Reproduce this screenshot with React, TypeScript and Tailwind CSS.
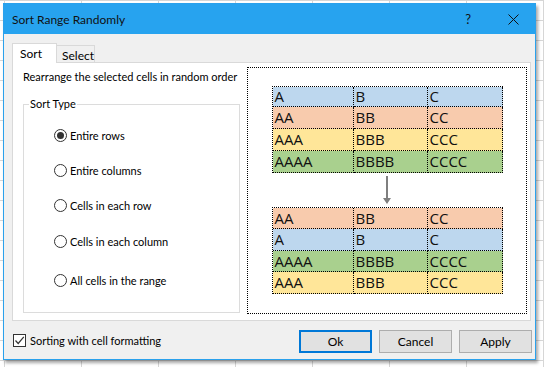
import React from 'react';

const ui = "font-['Lato','Open_Sans',sans-serif] text-[11px] leading-[15px] text-black";

const BLUE = 'bg-[#bdd7ee]';
const ORANGE = 'bg-[#f8cbad]';
const YELLOW = 'bg-[#ffe699]';
const GREEN = 'bg-[#a9d08e]';

type Row = { color: string; cells: string[]; h: string };

const topRows: Row[] = [
  { color: BLUE, cells: ['A', 'B', 'C'], h: 'h-[20px]' },
  { color: ORANGE, cells: ['AA', 'BB', 'CC'], h: 'h-[22px]' },
  { color: YELLOW, cells: ['AAA', 'BBB', 'CCC'], h: 'h-[22px]' },
  { color: GREEN, cells: ['AAAA', 'BBBB', 'CCCC'], h: 'h-[22px]' },
];

const bottomRows: Row[] = [
  { color: ORANGE, cells: ['AA', 'BB', 'CC'], h: 'h-[21px]' },
  { color: BLUE, cells: ['A', 'B', 'C'], h: 'h-[22px]' },
  { color: GREEN, cells: ['AAAA', 'BBBB', 'CCCC'], h: 'h-[21px]' },
  { color: YELLOW, cells: ['AAA', 'BBB', 'CCC'], h: 'h-[22px]' },
];

const colW = ['w-[81px]', 'w-[74px]', 'w-[75px]'];

const SampleTable: React.FC<{ rows: Row[] }> = ({ rows }) => (
  <div className="w-[231px] border-t border-l border-dotted border-black font-['Open_Sans',sans-serif] text-[15px] leading-none text-[#111]">
    {rows.map((r, i) => (
      <div key={i} className={`flex ${r.color}`}>
        {r.cells.map((c, j) => (
          <div
            key={j}
            className={`${colW[j]} ${r.h} flex items-center pl-[2px] border-r border-b border-dotted border-black`}
          >
            {c}
          </div>
        ))}
      </div>
    ))}
  </div>
);

const Radio: React.FC<{ label: string; checked?: boolean; className?: string }> = ({ label, checked, className }) => (
  <div className={`flex items-center gap-[3px] h-[15px] ${className ?? ''}`}>
    <span className="w-[13px] h-[13px] rounded-full border border-[#333] bg-white flex items-center justify-center">
      {checked && <span className="w-[7px] h-[7px] rounded-full bg-[#333]" />}
    </span>
    <span>{label}</span>
  </div>
);

export default function App() {
  return (
    <div className="w-[544px] h-[367px] overflow-hidden pl-[3px] pt-[3px] bg-white bg-[linear-gradient(90deg,#d6d6d6_1px,transparent_1px),linear-gradient(#d6d6d6_1px,transparent_1px)] bg-[length:77px_20px] bg-[position:4px_0px]">
      <div className={`w-[533px] h-[357px] border border-[#2aa1ec] bg-[#f0f0f0] flex flex-col shadow-[2px_3px_3px_rgba(0,0,0,0.35)] ${ui}`}>
        {/* title bar */}
        <div className="h-[30px] shrink-0 bg-[#27a3ef] flex items-center pl-[8px] pr-[16px]">
          <span className="text-[12px] text-[#111]">Sort Range Randomly</span>
          <span className="ml-auto text-[13px] text-[#111] mr-[37px]">?</span>
          <svg width="11" height="11" viewBox="0 0 11 11" className="text-[#111]">
            <path d="M0.5 0.5L10.5 10.5M10.5 0.5L0.5 10.5" stroke="currentColor" strokeWidth="1" />
          </svg>
        </div>

        {/* tabs */}
        <div className="flex items-end ml-[8px] mt-[9px] text-[12px]">
          <div className="relative z-10 w-[45px] h-[20px] -mb-[1px] bg-white border border-b-0 border-[#d9d9d9] pl-[7px] pt-[2px]">
            Sort
          </div>
          <div className="w-[38px] h-[17px] bg-[#f0f0f0] border border-l-0 border-b-0 border-[#d9d9d9] pl-[5px] pt-[2px]">
            Select
          </div>
        </div>

        {/* tab panel */}
        <div className="ml-[8px] w-[519px] h-[259px] bg-white border border-[#d9d9d9] flex">
          <div className="w-[234px] flex flex-col">
            <div className="pl-[10px] pt-[6px] h-[33px] whitespace-nowrap">Rearrange the selected cells in random order</div>
            <fieldset className="ml-[10px] w-[217px] h-[217px] border border-[#dcdcdc]">
              <legend className="ml-[5px] px-[1px] leading-[16px]">Sort Type</legend>
              <div className="pl-[30px]">
                <Radio label="Entire rows" checked className="mt-[16px]" />
                <Radio label="Entire columns" className="mt-[20px]" />
                <Radio label="Cells in each row" className="mt-[20px]" />
                <Radio label="Cells in each column" className="mt-[21px]" />
                <Radio label="All cells in the range" className="mt-[24px]" />
              </div>
            </fieldset>
          </div>
          <div className="mt-[4px] w-[280px] h-[247px] border border-dotted border-black flex flex-col items-center pt-[18px]">
            <SampleTable rows={topRows} />
            <svg width="10" height="34" viewBox="0 0 10 34" className="shrink-0">
              <rect x="4" y="3" width="2" height="23" fill="#7f7f7f" />
              <path d="M1 25 L9 25 L5 31 Z" fill="#7f7f7f" />
            </svg>
            <SampleTable rows={bottomRows} />
          </div>
        </div>

        {/* bottom row */}
        <div className="flex-1 flex items-center pl-[9px] pr-[3px]">
          <span className="w-[13px] h-[13px] border border-[#333] bg-white flex items-center justify-center">
            <svg width="11" height="11" viewBox="0 0 11 11">
              <path d="M1.5 5.5L4.2 8.5L9.8 1.8" fill="none" stroke="#333" strokeWidth="1.2" />
            </svg>
          </span>
          <span className="ml-[4px]">Sorting with cell formatting</span>
          <div className="ml-auto flex gap-[7px] mt-[2px] text-[12px]">
            <button className="w-[73px] h-[23px] bg-[#e1e1e1] border-2 border-[#0078d7]">Ok</button>
            <button className="w-[73px] h-[23px] bg-[#e1e1e1] border border-[#adadad]">Cancel</button>
            <button className="w-[73px] h-[23px] bg-[#e1e1e1] border border-[#adadad]">Apply</button>
          </div>
        </div>
      </div>
    </div>
  );
}
